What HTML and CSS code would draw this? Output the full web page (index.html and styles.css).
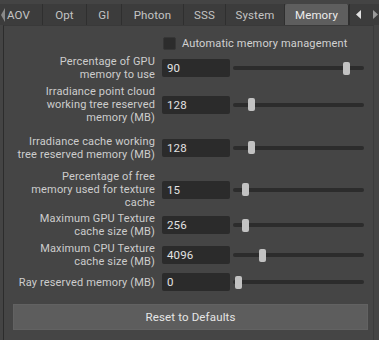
FILE: index.html
```html
<!DOCTYPE html>
<html lang="en">
<head>
    <meta charset="UTF-8">
    <title>Render Settings - Memory</title>
    <link rel="stylesheet" href="styles.css">
</head>
<body>
    <div class="tabbar">
        <div class="tab tab-aov">
            <svg class="tab-edge" width="4" height="14" viewBox="0 0 4 14"><polygon points="4,0 4,14 0,7" fill="#8a8a8a"/></svg>
            AOV
        </div>
        <div class="tab tab-opt">Opt</div>
        <div class="tab tab-gi">GI</div>
        <div class="tab tab-photon">Photon</div>
        <div class="tab tab-sss">SSS</div>
        <div class="tab tab-system">System</div>
        <div class="tab tab-memory active">Memory</div>
        <div class="tab-arrows">
            <svg width="6" height="9" viewBox="0 0 6 9"><polygon points="5,0 5,9 0,4.5" fill="#e2e2e2"/></svg>
            <svg width="6" height="9" viewBox="0 0 6 9"><polygon points="1,0 1,9 6,4.5" fill="#9a9a9a"/></svg>
        </div>
    </div>

    <div class="panel">
        <div class="settings">
            <div class="check-row">
                <span class="checkbox"></span>
                <span>Automatic memory management</span>
            </div>

            <div class="label">Percentage of GPU<br>memory to use</div>
            <div class="field">90</div>
            <div class="slider" style="--pos: 0.9"><div class="track"></div><div class="thumb"></div></div>

            <div class="label">Irradiance point cloud<br>working tree reserved<br>memory (MB)</div>
            <div class="field">128</div>
            <div class="slider" style="--pos: 0.108"><div class="track"></div><div class="thumb"></div></div>

            <div class="label">Irradiance cache working<br>tree reserved memory (MB)</div>
            <div class="field">128</div>
            <div class="slider" style="--pos: 0.108"><div class="track"></div><div class="thumb"></div></div>

            <div class="label">Percentage of free<br>memory used for texture<br>cache</div>
            <div class="field">15</div>
            <div class="slider" style="--pos: 0.058"><div class="track"></div><div class="thumb"></div></div>

            <div class="label">Maximum GPU Texture<br>cache size (MB)</div>
            <div class="field">256</div>
            <div class="slider" style="--pos: 0.058"><div class="track"></div><div class="thumb"></div></div>

            <div class="label">Maximum CPU Texture<br>cache size (MB)</div>
            <div class="field">4096</div>
            <div class="slider" style="--pos: 0.2"><div class="track"></div><div class="thumb"></div></div>

            <div class="label">Ray reserved memory (MB)</div>
            <div class="field">0</div>
            <div class="slider" style="--pos: 0"><div class="track"></div><div class="thumb"></div></div>
        </div>

        <button class="reset-btn">Reset to Defaults</button>
    </div>
</body>
</html>
```

FILE: styles.css
```css
body {
    margin: 0;
    padding: 0;
    font-family: Roboto, 'Liberation Sans', sans-serif;
    font-size: 11px;
    letter-spacing: 0.15px;
    background-color: #444444;
    color: #cfcfcf;
    overflow: hidden;
}

.tabbar {
    display: flex;
    height: 25px;
    padding-top: 4px;
    box-sizing: border-box;
}

.tab {
    position: relative;
    display: flex;
    align-items: center;
    justify-content: center;
    height: 21px;
    background: #3c3c3c;
    border-right: 1px solid #2f2f2f;
    box-sizing: border-box;
    color: #c4c4c4;
    font-size: 11.5px;
}

.tab.active {
    background: #5e5e5e;
    color: #ececec;
    border-radius: 2px 2px 0 0;
}

.tab-edge {
    position: absolute;
    left: 1px;
    top: 4px;
}

.tab-aov { width: 43px; padding-right: 5px; }
.tab-opt { width: 44px; }
.tab-gi { width: 35px; }
.tab-photon { width: 62px; }
.tab-sss { width: 42px; }
.tab-system { width: 59px; }
.tab-memory { width: 64px; }

.tab-arrows {
    flex: 1;
    display: flex;
    align-items: center;
    gap: 10px;
    padding-left: 6px;
    height: 21px;
    background: #3c3c3c;
    border-left: 1px solid #2f2f2f;
}

.panel {
    width: 371px;
    margin-left: 3px;
    padding: 10px 5px 0 9px;
    box-sizing: border-box;
    border-top: 1px solid #393939;
    border-left: 1px solid #2c2c2c;
    border-right: 1px solid #3b3b3b;
    height: 315px;
    background: #454545;
}

.settings {
    display: grid;
    grid-template-columns: 1fr 68px 134px;
    grid-template-rows: 15px 26px 39px 39px 37px 26px 26px 20px;
    row-gap: 4px;
    align-items: center;
    margin-right: 4px;
}

.check-row {
    grid-column: 2 / 4;
    display: flex;
    align-items: center;
    gap: 6px;
    margin-left: 1px;
    color: #d2d2d2;
}

.checkbox {
    width: 13px;
    height: 13px;
    background: #2c2c2c;
    border: 1px solid #363636;
    border-radius: 2px;
    box-sizing: border-box;
}

.label {
    text-align: right;
    padding-right: 7px;
    line-height: 13px;
    color: #cdcdcd;
}

.field {
    height: 18px;
    line-height: 18px;
    padding-left: 5px;
    background: #2b2b2b;
    border-radius: 2px;
    color: #e2e2e2;
    font-size: 11.5px;
}

.slider {
    position: relative;
    display: flex;
    align-items: center;
    height: 13px;
    margin-left: 3px;
}

.track {
    flex: 1;
    height: 4px;
    background: #2c2c2c;
    border-radius: 2px;
}

.thumb {
    position: absolute;
    top: 0;
    left: calc(2px + var(--pos) * (100% - 11px));
    width: 7px;
    height: 13px;
    background: #c2c2c2;
    border-radius: 2px;
}

.reset-btn {
    display: block;
    width: 100%;
    height: 26px;
    margin-top: 12px;
    background: #5d5d5d;
    border: 1px solid #626262;
    color: #e6e6e6;
    font-family: inherit;
    font-size: 11.5px;
    letter-spacing: 0.15px;
    cursor: pointer;
}

.reset-btn:hover {
    background: #666666;
}
```
